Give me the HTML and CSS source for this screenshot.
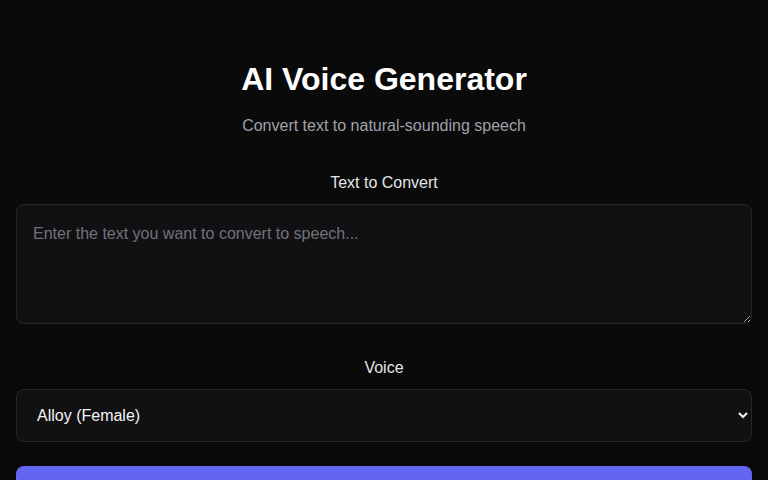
FILE: index.html
```html
<!DOCTYPE html>
<html lang="en">
<head>
<meta charset="utf-8">
<title>AI Voice Generator</title>
<link rel="stylesheet" href="styles.css">
</head>
<body>
<main class="container">
  <header class="header">
    <h1 class="title">AI Voice Generator</h1>
    <p class="subtitle">Convert text to natural-sounding speech</p>
  </header>
  <div class="field">
    <label class="label" for="text">Text to Convert</label>
    <textarea id="text" class="textarea" placeholder="Enter the text you want to convert to speech..."></textarea>
  </div>
  <div class="field">
    <label class="label" for="voice">Voice</label>
    <select id="voice" class="select">
      <option>Alloy (Female)</option>
      <option>Echo (Male)</option>
    </select>
  </div>
  <button class="button">Generate Speech</button>
</main>
</body>
</html>
```
FILE: styles.css
```css
* { box-sizing: border-box; }
html, body {
  margin: 0;
  background: #0a0a0b;
  color: #f4f4f5;
  font-family: "Liberation Sans", Arial, sans-serif;
}
.container {
  padding: 60px 16px 0;
  display: flex;
  flex-direction: column;
}
.header { text-align: center; margin-bottom: 33px; }
.title {
  margin: 0;
  font-size: 32px;
  line-height: 38px;
  font-weight: 700;
  color: #ffffff;
}
.subtitle {
  margin: 16px 0 0;
  font-size: 16px;
  line-height: 24px;
  color: #a1a1aa;
}
.field {
  display: flex;
  flex-direction: column;
  margin-bottom: 24px;
}
.label {
  text-align: center;
  font-size: 16px;
  line-height: 24px;
  color: #e4e4e7;
  margin-bottom: 9px;
}
.textarea {
  display: block;
  width: 100%;
  height: 120px;
  background: #111113;
  border: 1px solid #27272a;
  border-radius: 8px;
  padding: 17px 16px 16px;
  color: #f4f4f5;
  font-family: inherit;
  font-size: 16px;
  line-height: 24px;
  resize: vertical;
  margin-bottom: 8px;
}
.textarea::placeholder { color: #71717a; }
.select {
  display: block;
  width: 100%;
  height: 53px;
  background: #111113;
  border: 1px solid #27272a;
  border-radius: 8px;
  padding: 0 16px;
  color: #f4f4f5;
  font-family: inherit;
  font-size: 16px;
}
.button {
  width: 100%;
  height: 52px;
  background: #6366f1;
  border: none;
  border-radius: 8px;
  color: #fff;
  font-family: inherit;
  font-size: 16px;
  font-weight: 600;
}
```
